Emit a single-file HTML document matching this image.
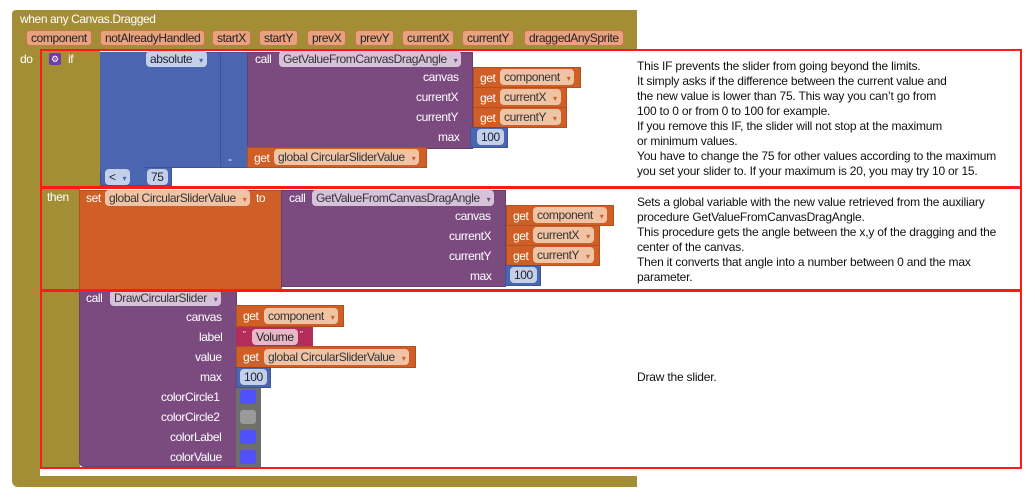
<!DOCTYPE html>
<html><head><meta charset="utf-8"><style>
*{margin:0;padding:0;box-sizing:border-box}
body{width:1035px;height:498px;background:#fff;position:relative;overflow:hidden;font-family:"Liberation Sans",sans-serif;}
.a{position:absolute}
.t{position:absolute;color:#fff;font-size:12px;letter-spacing:-0.4px;white-space:nowrap;line-height:14px}
.p{position:absolute;height:16px;border-radius:4px;font-size:12px;letter-spacing:-0.4px;line-height:16px;padding:0 4px;white-space:nowrap;color:#222;margin-top:-1px}
.po{background:#E9A27E;border:1px solid #c7784f;line-height:14px}
.pp{background:#D6C3DA;color:#333}
.pb{background:#C3D0EA;color:#223}
.pg{background:#F0C3A5;color:#333}
.olive{background:#A48E35}
.org{background:#CF5F27;border:1px solid #b24f1e}
.pur{background:#7B4B80;border:1px solid #6a3d70}
.blu{background:#4B66B0;border:1px solid #3d549a}
.red{position:absolute;border:2px solid #ff1a1a}
.txt{position:absolute;left:637px;font-size:12px;line-height:15px;color:#111;letter-spacing:-0.2px;white-space:nowrap}
.dd{font-size:8px;color:#fff;margin-left:4px}
.sw{position:absolute;width:16px;height:14px;border-radius:3px}
</style></head><body>
<div class="a olive" style="left:12px;top:10px;width:625px;height:40px;border-radius:4px 0 0 0"></div>
<div class="a olive" style="left:12px;top:50px;width:28px;height:430px;border-radius:0 0 0 6px"></div>
<div class="a olive" style="left:12px;top:468px;width:625px;height:19px;border-radius:0 0 0 6px"></div>
<div class="a" style="left:40px;top:468px;width:597px;height:8px;background:#fff"></div>
<div class="a olive" style="left:40px;top:50px;width:40px;height:418px"></div>
<div class="a olive" style="left:80px;top:50px;width:20px;height:138px"></div>
<div class="t" style="left:20px;top:12px">when any Canvas.Dragged</div>
<div class="p po" style="left:26px;top:31px">component</div>
<div class="p po" style="left:100px;top:31px">notAlreadyHandled</div>
<div class="p po" style="left:212px;top:31px">startX</div>
<div class="p po" style="left:259px;top:31px">startY</div>
<div class="p po" style="left:307px;top:31px">prevX</div>
<div class="p po" style="left:355px;top:31px">prevY</div>
<div class="p po" style="left:402px;top:31px">currentX</div>
<div class="p po" style="left:462px;top:31px">currentY</div>
<div class="p po" style="left:524px;top:31px">draggedAnySprite</div>
<div class="t" style="left:20px;top:52px">do</div>
<div class="a" style="left:49px;top:53px;width:12px;height:12px;background:#6a3fa8;border-radius:2px;color:#fff;font-size:9px;line-height:12px;text-align:center">⚙</div>
<div class="t" style="left:68px;top:52px">if</div>
<div class="t" style="left:47px;top:190px">then</div>

<div class="a blu" style="left:100px;top:52px;width:72px;height:134px"></div>
<div class="a blu" style="left:143px;top:52px;width:80px;height:116px"></div>
<div class="a" style="left:100px;top:52px;width:45px;height:118px;background:#4B66B0"></div>
<div class="p pb" style="left:146px;top:52px">absolute <span class="dd" style="color:#4b66b0">▾</span></div>
<div class="a blu" style="left:220px;top:52px;width:30px;height:116px"></div>
<div class="t" style="left:228px;top:152px">-</div>
<div class="p pb" style="left:105px;top:170px">&lt; <span class="dd" style="color:#4b66b0">▾</span></div>
<div class="p pb" style="left:147px;top:170px">75</div>

<div class="a pur" style="left:247px;top:52px;width:226px;height:97px"></div>
<div class="t" style="left:255px;top:52px">call</div>
<div class="p pp" style="left:279px;top:52px">GetValueFromCanvasDragAngle <span class="dd" style="color:#7b4b80">▾</span></div>
<div class="t" style="left:423px;top:70px">canvas</div>
<div class="t" style="left:416px;top:90px">currentX</div>
<div class="t" style="left:416px;top:110px">currentY</div>
<div class="t" style="left:438px;top:130px">max</div>
<div class="a org" style="left:473px;top:67px;width:108px;height:21px"></div>
<div class="t" style="left:480px;top:71px">get</div>
<div class="p pg" style="left:500px;top:70px">component <span class="dd" style="color:#cf5f27">▾</span></div>
<div class="a org" style="left:473px;top:87px;width:94px;height:21px"></div>
<div class="t" style="left:480px;top:91px">get</div>
<div class="p pg" style="left:500px;top:90px">currentX <span class="dd" style="color:#cf5f27">▾</span></div>
<div class="a org" style="left:473px;top:107px;width:94px;height:21px"></div>
<div class="t" style="left:480px;top:111px">get</div>
<div class="p pg" style="left:500px;top:110px">currentY <span class="dd" style="color:#cf5f27">▾</span></div>
<div class="a blu" style="left:470px;top:127px;width:38px;height:21px"></div>
<div class="p pb" style="left:477px;top:130px">100</div>
<div class="a org" style="left:247px;top:147px;width:180px;height:21px"></div>
<div class="t" style="left:254px;top:151px">get</div>
<div class="p pg" style="left:274px;top:150px">global CircularSliderValue <span class="dd" style="color:#cf5f27">▾</span></div>

<div class="a org" style="left:79px;top:190px;width:203px;height:100px"></div>
<div class="t" style="left:86px;top:191px">set</div>
<div class="p pg" style="left:105px;top:191px">global CircularSliderValue <span class="dd" style="color:#cf5f27">▾</span></div>
<div class="t" style="left:256px;top:191px">to</div>
<div class="a pur" style="left:281px;top:190px;width:225px;height:97px"></div>
<div class="t" style="left:289px;top:191px">call</div>
<div class="p pp" style="left:312px;top:191px">GetValueFromCanvasDragAngle <span class="dd" style="color:#7b4b80">▾</span></div>
<div class="t" style="left:455px;top:209px">canvas</div>
<div class="t" style="left:449px;top:229px">currentX</div>
<div class="t" style="left:449px;top:249px">currentY</div>
<div class="t" style="left:470px;top:269px">max</div>
<div class="a org" style="left:506px;top:205px;width:108px;height:21px"></div>
<div class="t" style="left:513px;top:209px">get</div>
<div class="p pg" style="left:533px;top:208px">component <span class="dd" style="color:#cf5f27">▾</span></div>
<div class="a org" style="left:506px;top:225px;width:94px;height:21px"></div>
<div class="t" style="left:513px;top:229px">get</div>
<div class="p pg" style="left:533px;top:228px">currentX <span class="dd" style="color:#cf5f27">▾</span></div>
<div class="a org" style="left:506px;top:245px;width:94px;height:21px"></div>
<div class="t" style="left:513px;top:249px">get</div>
<div class="p pg" style="left:533px;top:248px">currentY <span class="dd" style="color:#cf5f27">▾</span></div>
<div class="a blu" style="left:505px;top:265px;width:36px;height:21px"></div>
<div class="p pb" style="left:510px;top:268px">100</div>

<div class="a pur" style="left:79px;top:290px;width:158px;height:177px;border-radius:0 0 0 5px"></div>
<div class="t" style="left:86px;top:291px">call</div>
<div class="p pp" style="left:110px;top:291px">DrawCircularSlider <span class="dd" style="color:#7b4b80">▾</span></div>
<div class="t" style="left:186px;top:310px">canvas</div>
<div class="t" style="left:199px;top:330px">label</div>
<div class="t" style="left:195px;top:350px">value</div>
<div class="t" style="left:200px;top:370px">max</div>
<div class="t" style="left:161px;top:390px">colorCircle1</div>
<div class="t" style="left:161px;top:410px">colorCircle2</div>
<div class="t" style="left:170px;top:430px">colorLabel</div>
<div class="t" style="left:170px;top:450px">colorValue</div>
<div class="a org" style="left:236px;top:305px;width:108px;height:22px"></div>
<div class="t" style="left:243px;top:309px">get</div>
<div class="p pg" style="left:264px;top:309px">component <span class="dd" style="color:#cf5f27">▾</span></div>
<div class="a" style="left:236px;top:327px;width:77px;height:20px;background:#B42C5A"></div>
<div class="t" style="left:243px;top:328px;font-size:8px">"</div>
<div class="p" style="left:252px;top:330px;background:#E8B8C8;color:#222">Volume</div>
<div class="t" style="left:300px;top:328px;font-size:8px">"</div>
<div class="a org" style="left:236px;top:346px;width:180px;height:22px"></div>
<div class="t" style="left:243px;top:350px">get</div>
<div class="p pg" style="left:264px;top:350px">global CircularSliderValue <span class="dd" style="color:#cf5f27">▾</span></div>
<div class="a blu" style="left:236px;top:367px;width:35px;height:21px"></div>
<div class="p pb" style="left:240px;top:370px">100</div>
<div class="a" style="left:236px;top:388px;width:25px;height:79px;background:#6e6e6e"></div>
<div class="sw" style="left:240px;top:390px;background:#5050ff"></div>
<div class="sw" style="left:240px;top:410px;background:#9a9a9a"></div>
<div class="sw" style="left:240px;top:430px;background:#5050ff"></div>
<div class="sw" style="left:240px;top:450px;background:#5050ff"></div>

<div class="red" style="left:40px;top:49px;width:982px;height:139px"></div>
<div class="red" style="left:40px;top:187px;width:982px;height:104px"></div>
<div class="red" style="left:40px;top:290px;width:982px;height:179px"></div>

<div class="txt" style="top:59px">This IF prevents the slider from going beyond the limits.<br>It simply asks if the difference between the current value and<br>the new value is lower than 75. This way you can’t go from<br>100 to 0 or from 0 to 100 for example.<br>If you remove this IF, the slider will not stop at the maximum<br>or minimum values.<br>You have to change the 75 for other values according to the maximum<br>you set your slider to. If your maximum is 20, you may try 10 or 15.</div>
<div class="txt" style="top:195px">Sets a global variable with the new value retrieved from the auxiliary<br>procedure GetValueFromCanvasDragAngle.<br>This procedure gets the angle between the x,y of the dragging and the<br>center of the canvas.<br>Then it converts that angle into a number between 0 and the max<br>parameter.</div>
<div class="txt" style="top:370px">Draw the slider.</div>
</body></html>
